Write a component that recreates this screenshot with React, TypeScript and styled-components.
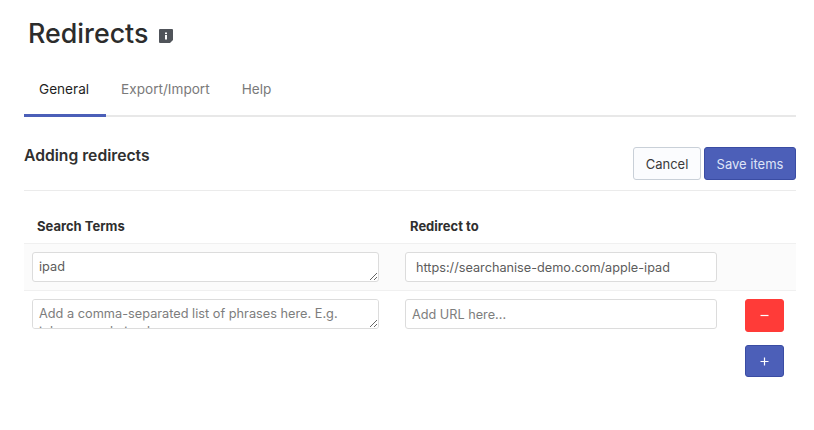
import React from "react";
import styled, { createGlobalStyle } from "styled-components";

const GlobalStyle = createGlobalStyle`
    html, body {
        margin: 0;
        padding: 0;
        background: #fff;
    }
    body {
        font-family: Inter, "Liberation Sans", sans-serif;
        color: #2b2b2b;
    }
`;

const Page = styled.div`
    width: 814px;
    height: 430px;
    padding: 0 18px 0 24px;
    box-sizing: border-box;
    overflow: hidden;
`;

const TitleRow = styled.div`
    display: flex;
    align-items: center;
    gap: 11px;
    height: 67px;
    padding-left: 4px;
`;

const Title = styled.h1`
    margin: -2px 0 0;
    font-size: 26.8px;
    font-weight: 550;
    line-height: 34px;
    color: #2c2c2c;
`;

const InfoBadge = styled.svg`
    width: 14px;
    height: 14px;
    margin-top: 5px;
    flex: none;
`;

const Tabs = styled.div`
    display: flex;
    height: 50px;
    box-sizing: border-box;
    border-bottom: 2px solid #e8e8e8;
`;

const Tab = styled.div<{ $active?: boolean }>`
    padding: 0 17px 3px 15px;
    height: 50px;
    flex: none;
    box-sizing: border-box;
    display: flex;
    align-items: center;
    font-size: 13.6px;
    color: ${({ $active }) => ($active ? "#1f1f1f" : "#7a7a7a")};
    border-bottom: 3px solid ${({ $active }) => ($active ? "#4b5fb8" : "transparent")};
`;

const SectionHead = styled.div`
    display: flex;
    justify-content: space-between;
    align-items: flex-start;
    height: 74px;
    padding-top: 30px;
    box-sizing: border-box;
    border-bottom: 1px solid #ebebeb;
`;

const SectionTitle = styled.h2`
    margin: 0;
    font-size: 15.7px;
    font-weight: 600;
    line-height: 18px;
    color: #303030;
`;

const Actions = styled.div`
    display: flex;
    gap: 3px;
`;

const Button = styled.button<{ $primary?: boolean }>`
    height: 33px;
    box-sizing: border-box;
    padding: 0;
    width: ${({ $primary }) => ($primary ? "92px" : "68px")};
    font-family: inherit;
    font-size: 13px;
    border-radius: 3px;
    border: 1px solid ${({ $primary }) => ($primary ? "#3a4ca3" : "#c9d0d8")};
    background: ${({ $primary }) => ($primary ? "#4c5fb8" : "#fbfcfe")};
    color: ${({ $primary }) => ($primary ? "#dfe4f7" : "#3a3a3a")};
`;

const Grid = styled.div`
    display: grid;
    grid-template-columns: 373px 340px 39px;
    padding-left: 8px;
`;

const HeadRow = styled(Grid)`
    height: 53px;
    align-items: center;
    padding-top: 18px;
    box-sizing: border-box;
    border-bottom: 1px solid #f0f0f0;
`;

const HeadCell = styled.div`
    padding-left: 5px;
    font-size: 13px;
    font-weight: 700;
    color: #2f2f2f;
`;

const ItemRow = styled(Grid)<{ $shaded?: boolean }>`
    padding-top: 8px;
    height: 47px;
    box-sizing: border-box;
    background: ${({ $shaded }) => ($shaded ? "#fbfbfb" : "transparent")};
    border-bottom: ${({ $shaded }) => ($shaded ? "1px solid #f0f0f0" : "none")};
`;

const TermsArea = styled.textarea`
    display: block;
    width: 347px;
    height: 30px;
    margin: 0;
    padding: 5px 6px;
    box-sizing: border-box;
    font-family: inherit;
    font-size: 12.75px;
    line-height: 18px;
    color: #5c5c5c;
    background: #fff;
    border: 1px solid #dcdcdc;
    border-radius: 3px;
    outline: none;
    resize: both;
    &::placeholder {
        color: #7d7d7d;
    }
`;

const UrlInput = styled.input<{ $indent?: boolean }>`
    display: block;
    width: 312px;
    height: 30px;
    margin: 0;
    padding: 0 6px 0 ${({ $indent }) => ($indent ? "10px" : "6px")};
    box-sizing: border-box;
    font-family: inherit;
    font-size: 12.7px;
    color: #5c5c5c;
    background: #fff;
    border: 1px solid #dcdcdc;
    border-radius: 3px;
    outline: none;
    &::placeholder {
        color: #7d7d7d;
    }
`;

const IconButton = styled.button<{ $danger?: boolean }>`
    width: 39px;
    height: ${({ $danger }) => ($danger ? "33px" : "32px")};
    padding: 0;
    box-sizing: border-box;
    display: flex;
    align-items: center;
    justify-content: center;
    border-radius: 3px;
    border: 1px solid ${({ $danger }) => ($danger ? "#ff3b38" : "#3a4ca3")};
    background: ${({ $danger }) => ($danger ? "#ff3b38" : "#4c5fb8")};
`;

const AddRow = styled.div`
    display: flex;
    justify-content: flex-end;
    margin-top: 7px;
    padding-right: 12px;
`;

const Glyph = styled.svg`
    width: 9px;
    height: 9px;
    stroke: #fff;
    stroke-width: 1.2;
    fill: none;
`;

export default function App() {
    return (
        <Page>
            <GlobalStyle />
            <TitleRow>
                <Title>Redirects</Title>
                <InfoBadge viewBox="0 0 14 14">
                    <path d="M1 0h12a1 1 0 0 1 1 1v10l-3 3h-10a1 1 0 0 1-1-1v-12a1 1 0 0 1 1-1z" fill="#50545a" />
                    <rect x="6" y="3.5" width="2" height="1.6" fill="#fff" />
                    <rect x="6" y="6" width="2" height="4.5" fill="#fff" />
                </InfoBadge>
            </TitleRow>
            <Tabs>
                <Tab $active>General</Tab>
                <Tab>Export/Import</Tab>
                <Tab>Help</Tab>
            </Tabs>
            <SectionHead>
                <SectionTitle>Adding redirects</SectionTitle>
                <Actions>
                    <Button>Cancel</Button>
                    <Button $primary>Save items</Button>
                </Actions>
            </SectionHead>
            <HeadRow>
                <HeadCell>Search Terms</HeadCell>
                <HeadCell>Redirect to</HeadCell>
            </HeadRow>
            <ItemRow $shaded>
                <TermsArea defaultValue="ipad" />
                <UrlInput $indent defaultValue="https://searchanise-demo.com/apple-ipad" />
            </ItemRow>
            <ItemRow>
                <TermsArea placeholder="Add a comma-separated list of phrases here. E.g. iphone, apple ipad" />
                <UrlInput placeholder="Add URL here..." />
                <IconButton $danger>
                    <Glyph viewBox="0 0 9 9">
                        <path d="M0.5 4.5h8" />
                    </Glyph>
                </IconButton>
            </ItemRow>
            <AddRow>
                <IconButton>
                    <Glyph viewBox="0 0 9 9">
                        <path d="M0.5 4.5h8M4.5 0.5v8" />
                    </Glyph>
                </IconButton>
            </AddRow>
        </Page>
    );
}
